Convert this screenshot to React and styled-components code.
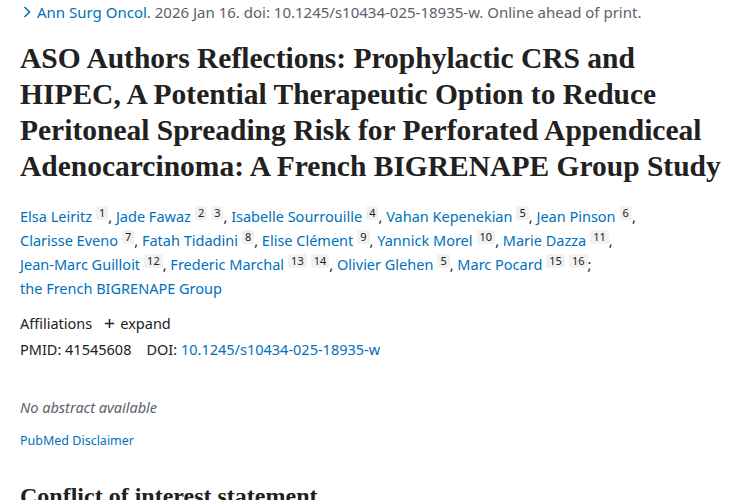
import React from "react";
import styled, { createGlobalStyle } from "styled-components";

const GlobalStyle = createGlobalStyle`
  html, body {
    margin: 0;
    padding: 0;
    background: #fff;
  }
  body {
    font-family: "Noto Sans", "Open Sans", sans-serif;
    color: #212121;
    overflow: hidden;
  }
`;

const authors = [
  { name: "Elsa Leiritz", refs: ["1"] },
  { name: "Jade Fawaz", refs: ["2", "3"] },
  { name: "Isabelle Sourrouille", refs: ["4"] },
  { name: "Vahan Kepenekian", refs: ["5"] },
  { name: "Jean Pinson", refs: ["6"], br: true },
  { name: "Clarisse Eveno", refs: ["7"] },
  { name: "Fatah Tidadini", refs: ["8"] },
  { name: "Elise Clément", refs: ["9"] },
  { name: "Yannick Morel", refs: ["10"] },
  { name: "Marie Dazza", refs: ["11"], br: true },
  { name: "Jean-Marc Guilloit", refs: ["12"] },
  { name: "Frederic Marchal", refs: ["13", "14"] },
  { name: "Olivier Glehen", refs: ["5"] },
  { name: "Marc Pocard", refs: ["15", "16"], last: true },
];

export default function App() {
  return (
    <>
      <GlobalStyle />
      <Page>
        <Citation>
          <Chevron viewBox="0 0 10 14">
            <path d="M2.5 2 L7.5 7 L2.5 12" fill="none" stroke="#0071bc" strokeWidth="1.6" />
          </Chevron>
          <Link>Ann Surg Oncol</Link>. 2026 Jan 16. doi: 10.1245/s10434-025-18935-w. Online ahead of print.
        </Citation>

        <Title>
          ASO Authors Reflections: Prophylactic CRS and
          <br />
          HIPEC, A Potential Therapeutic Option to Reduce
          <br />
          Peritoneal Spreading Risk for Perforated Appendiceal
          <br />
          Adenocarcinoma: A French BIGRENAPE Group Study
        </Title>

        <Authors>
          {authors.map((a) => (
            <React.Fragment key={a.name}>
              <Link>{a.name}</Link>
              {a.refs.map((r) => (
                <Sup key={r}>{r}</Sup>
              ))}
              {a.last ? ";" : ", "}
              {a.br && <br />}
            </React.Fragment>
          ))}
          <br />
          <Link>the French BIGRENAPE Group</Link>
        </Authors>

        <Meta>
          <Row>
            Affiliations
            <Expand>
              <Plus viewBox="0 0 12 12">
                <path d="M6 1 V11 M1 6 H11" stroke="#212121" strokeWidth="1.6" />
              </Plus>
              expand
            </Expand>
          </Row>
          <Row>
            PMID: 41545608
            <Spacer />
            DOI: <Link>10.1245/s10434-025-18935-w</Link>
          </Row>
        </Meta>

        <NoAbstract>No abstract available</NoAbstract>
        <Disclaimer>PubMed Disclaimer</Disclaimer>

        <SectionTitle>Conflict of interest statement</SectionTitle>
      </Page>
    </>
  );
}

const Page = styled.div`
  padding: 0 20px;
  display: flex;
  flex-direction: column;
`;

const Link = styled.span`
  color: #0071bc;
`;

const Citation = styled.div`
  display: flex;
  align-items: center;
  white-space: pre;
  padding-top: 2px;
  height: 20px;
  font-size: 15px;
  color: #5b616b;
  ${Link} {
    margin-left: 5px;
  }
`;

const Chevron = styled.svg`
  width: 10px;
  height: 14px;
  margin-left: 2px;
`;

const Title = styled.h1`
  margin: 18px 0 0;
  font-family: "Liberation Serif", serif;
  font-weight: bold;
  font-size: 29.5px;
  line-height: 36px;
  white-space: nowrap;
  color: #212121;
`;

const Authors = styled.div`
  margin-top: 20px;
  font-size: 14.5px;
  line-height: 24px;
  color: #212121;
`;

const Sup = styled.sup`
  display: inline-block;
  font-size: 11px;
  line-height: 14px;
  padding: 0 3px;
  margin-left: 4px;
  background: #f1f1f1;
  border-radius: 2px;
  color: #212121;
  vertical-align: 5px;
`;

const Meta = styled.div`
  margin-top: 10px;
  font-size: 14.5px;
  line-height: 26px;
`;

const Row = styled.div`
  display: flex;
  align-items: center;
  white-space: pre;
`;

const Expand = styled.span`
  display: inline-flex;
  align-items: center;
  margin-left: 12px;
`;

const Plus = styled.svg`
  width: 11px;
  height: 11px;
  margin-right: 5px;
`;

const Spacer = styled.span`
  width: 15px;
`;

const NoAbstract = styled.p`
  margin: 35px 0 0;
  font-size: 14.5px;
  font-style: italic;
  color: #5b616b;
`;

const Disclaimer = styled.div`
  margin-top: 15px;
  font-size: 12.5px;
  color: #0071bc;
`;

const SectionTitle = styled.h2`
  margin: 34px 0 0;
  font-family: "Liberation Serif", serif;
  font-weight: bold;
  font-size: 24px;
  color: #212121;
`;
